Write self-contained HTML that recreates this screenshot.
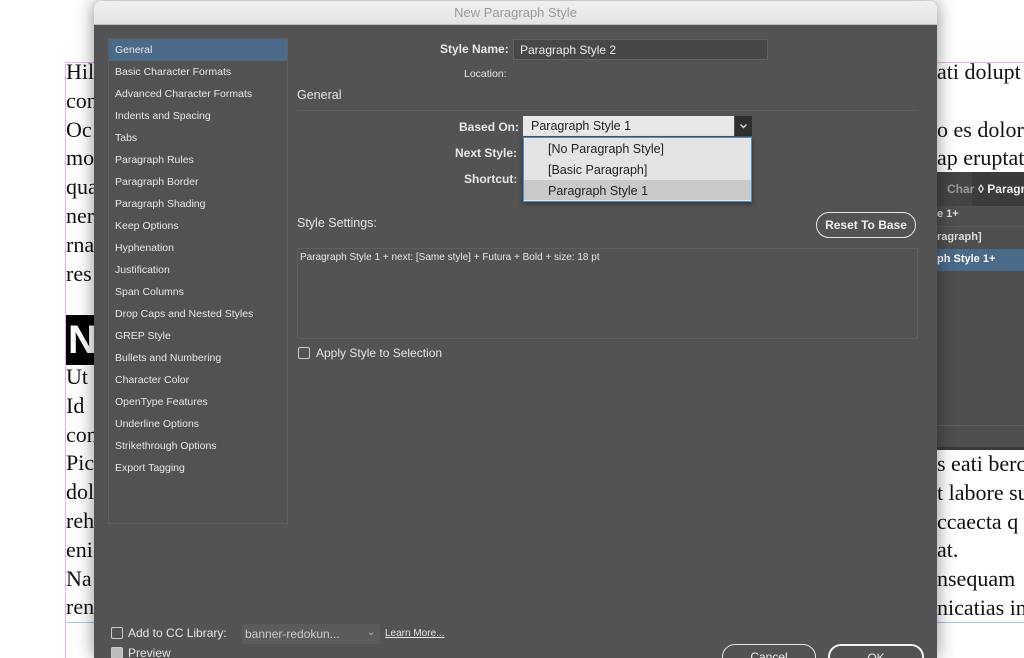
<!DOCTYPE html>
<html style="overflow:hidden;width:1024px;height:658px"><head><meta charset="utf-8"><style>
body{margin:0;width:1024px;height:658px;overflow:hidden;background:#fff;position:relative;font-family:"Liberation Sans",sans-serif}
.a{position:absolute}
.doc{font-family:"Liberation Serif",serif;font-size:22px;color:#111;white-space:nowrap;line-height:22px}
.dlg{left:94px;top:1px;width:843px;height:657px;background:#535353;border-radius:6px 6px 0 0;box-shadow:0 0 18px rgba(0,0,0,.45);overflow:hidden}
.tb{left:0;top:0;width:843px;height:23px;background:linear-gradient(#f0f0f0,#e4e4e4);border-bottom:1px solid #bdbdbd;color:#9a9a9a;font-size:13px;text-align:center;line-height:23px}
.t{color:#e6e6e6;font-size:11px;white-space:nowrap}
.lbl{color:#e8e8e8;font-size:12px;font-weight:bold;white-space:nowrap}
.li{position:absolute;left:6px;font-size:10.5px;color:#e8e8e8;white-space:nowrap}
</style></head><body>
<div class="a" style="left:65px;top:62px;width:1px;height:596px;background:#e6b3e6"></div>
<div class="a" style="left:65px;top:62px;width:959px;height:1px;background:#e6b3e6"></div>
<div class="a" style="left:65px;top:622px;width:959px;height:1px;background:#a9c6ef"></div>
<div class="a doc" style="left:66px;top:58px;line-height:28.8px">Hil<br>con<br>Oc<br>mo<br>qua<br>ner<br>rna<br>res</div>
<div class="a" style="left:66px;top:315px;width:30px;height:50px;background:#000"></div>
<div class="a" style="left:68px;top:318px;color:#fff;font-weight:bold;font-size:40px">N</div>
<div class="a doc" style="left:66px;top:363px;line-height:28.8px">Ut<br>Id<br>con<br>Pic<br>dol<br>reh<br>eni<br>Na<br>ren</div>
<div class="a doc" style="left:937px;top:58px;line-height:28.8px">ati dolupt<br><br>o es dolor<br>ap eruptat</div>
<div class="a doc" style="left:937px;top:450px;line-height:28.8px">s eati berc<br>t labore su<br>ccaecta q<br>at.<br>nsequam<br>nicatias in</div>
<div class="a" style="left:937px;top:172px;width:87px;height:278px;background:#4f4f4f"></div>
<div class="a" style="left:937px;top:172px;width:87px;height:34px;background:#3b3b3b"></div>
<div class="a" style="left:937px;top:172px;width:35px;height:34px;background:#444"></div>
<div class="a" style="left:947px;top:182px;color:#999;font-size:12px;font-weight:bold;white-space:nowrap">Char</div>
<div class="a" style="left:978px;top:182px;color:#eee;font-size:12px;font-weight:bold;white-space:nowrap">◊ Paragr</div>
<div class="a" style="left:937px;top:208px;color:#ddd;font-size:11px;font-weight:bold">e 1+</div>
<div class="a" style="left:937px;top:226px;width:87px;height:1px;background:#5a5a5a"></div>
<div class="a" style="left:937px;top:231px;color:#ddd;font-size:11px;font-weight:bold">ragraph]</div>
<div class="a" style="left:937px;top:249px;width:87px;height:22px;background:#4a6a8a"></div>
<div class="a" style="left:937px;top:253px;color:#fff;font-size:11px;font-weight:bold">ph Style 1+</div>
<div class="a" style="left:937px;top:425px;width:87px;height:1px;background:#5f5f5f"></div>
<div class="a" style="left:937px;top:447px;width:87px;height:3px;background:#3a3a3a"></div>
<div class="a dlg">
<div class="a tb">New Paragraph Style</div>
<div class="a" style="left:14px;top:37px;width:178px;height:484px;border:1px solid #5f5f5f;background:#525252">
<div class="a" style="left:0;top:0;width:178px;height:22px;background:#4b6a8a"></div>
<div class="li" style="top:5px">General</div>
<div class="li" style="top:27px">Basic Character Formats</div>
<div class="li" style="top:49px">Advanced Character Formats</div>
<div class="li" style="top:71px">Indents and Spacing</div>
<div class="li" style="top:93px">Tabs</div>
<div class="li" style="top:115px">Paragraph Rules</div>
<div class="li" style="top:137px">Paragraph Border</div>
<div class="li" style="top:159px">Paragraph Shading</div>
<div class="li" style="top:181px">Keep Options</div>
<div class="li" style="top:203px">Hyphenation</div>
<div class="li" style="top:225px">Justification</div>
<div class="li" style="top:247px">Span Columns</div>
<div class="li" style="top:269px">Drop Caps and Nested Styles</div>
<div class="li" style="top:291px">GREP Style</div>
<div class="li" style="top:313px">Bullets and Numbering</div>
<div class="li" style="top:335px">Character Color</div>
<div class="li" style="top:357px">OpenType Features</div>
<div class="li" style="top:379px">Underline Options</div>
<div class="li" style="top:401px">Strikethrough Options</div>
<div class="li" style="top:423px">Export Tagging</div>
</div>
<div class="a lbl" style="left:346px;top:41px">Style Name:</div>
<div class="a" style="left:419px;top:38px;width:253px;height:19px;background:#474747;border:1px solid #626262"></div>
<div class="a t" style="left:426px;top:42px;font-size:12px;color:#eee">Paragraph Style 2</div>
<div class="a t" style="left:370px;top:67px;font-size:10.5px">Location:</div>
<div class="a t" style="left:203px;top:87px;font-size:12.5px">General</div>
<div class="a" style="left:203px;top:109px;width:620px;height:1px;background:#5d5d5d"></div>
<div class="a lbl" style="left:365px;top:119px">Based On:</div>
<div class="a lbl" style="left:361px;top:145px">Next Style:</div>
<div class="a lbl" style="left:370px;top:171px">Shortcut:</div>
<div class="a" style="left:429px;top:115px;width:211px;height:20px;background:#e8e8e8"></div>
<div class="a" style="left:437px;top:118px;font-size:12.5px;color:#222">Paragraph Style 1</div>
<div class="a" style="left:641px;top:115px;width:17px;height:20px;background:#2f2f2f"></div>
<svg class="a" style="left:645px;top:121px" width="9" height="8"><path d="M1.5 2.5 L4.5 5.5 L7.5 2.5" stroke="#ddd" stroke-width="1.4" fill="none"/></svg>
<div class="a" style="left:429px;top:136px;width:227px;height:63px;background:#e4e4e4;border:1px solid #4a8fd0;box-shadow:0 2px 5px rgba(0,0,0,.4)"></div>
<div class="a" style="left:430px;top:179px;width:227px;height:20px;background:#c9c9c9"></div>
<div class="a" style="left:454px;top:138px;font-size:12.5px;color:#222;line-height:21px">[No Paragraph Style]<br>[Basic Paragraph]<br>Paragraph Style 1</div>
<div class="a t" style="left:203px;top:215px;font-size:12.5px">Style Settings:</div>
<div class="a" style="left:722px;top:211px;width:98px;height:24px;border:1.5px solid #e6e6e6;border-radius:13px;color:#eee;font-size:12px;font-weight:bold;text-align:center;line-height:24px">Reset To Base</div>
<div class="a" style="left:203px;top:247px;width:619px;height:89px;border:1px solid #5f5f5f"></div>
<div class="a t" style="left:206px;top:251px;font-size:10px">Paragraph Style 1 + next: [Same style] + Futura + Bold + size: 18 pt</div>
<div class="a" style="left:204px;top:346px;width:10px;height:10px;border:1px solid #ccc;border-radius:2px"></div>
<div class="a t" style="left:222px;top:345px;font-size:12px">Apply Style to Selection</div>
<div class="a" style="left:17px;top:626px;width:10px;height:10px;border:1px solid #ccc;border-radius:2px"></div>
<div class="a t" style="left:34px;top:625px;font-size:12px">Add to CC Library:</div>
<div class="a" style="left:148px;top:623px;width:138px;height:20px;background:#5b5b5b;border-radius:2px"></div>
<div class="a t" style="left:151px;top:626px;font-size:12px;color:#ccc">banner-redokun...</div>
<div class="a t" style="left:273px;top:626px;font-size:10px;color:#bbb">⌄</div>
<div class="a t" style="left:291px;top:627px;font-size:10px;text-decoration:underline">Learn More...</div>
<div class="a" style="left:17px;top:646px;width:10px;height:10px;border:1px solid #ccc;border-radius:2px;background:#bbb"></div>
<div class="a t" style="left:34px;top:645px;font-size:12px">Preview</div>
<div class="a" style="left:628px;top:643px;width:92px;height:30px;border:1.5px solid #e6e6e6;border-radius:13px;color:#eee;font-size:12px;text-align:center;line-height:24px">Cancel</div>
<div class="a" style="left:734px;top:643px;width:92px;height:30px;border:2px solid #f2f2f2;border-radius:13px;color:#eee;font-size:12px;text-align:center;line-height:24px">OK</div>
</div>
</body></html>
